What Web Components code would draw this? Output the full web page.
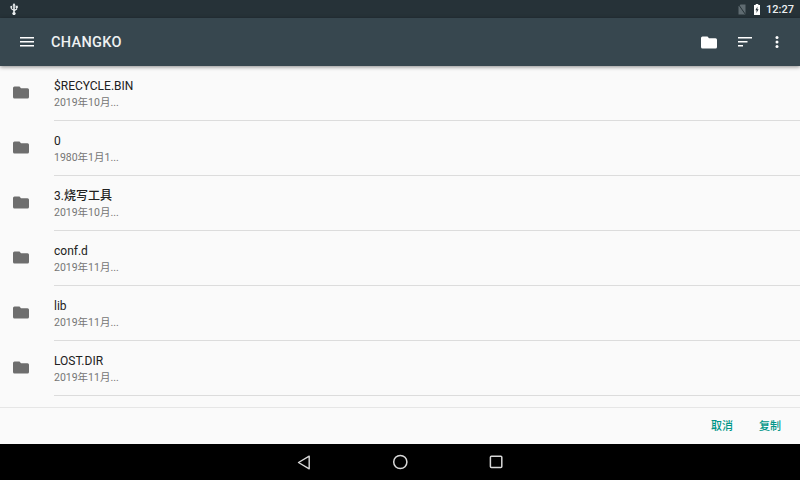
<!DOCTYPE html>
<html><head><meta charset="utf-8">
<style>
html,body{margin:0;padding:0;width:800px;height:480px;overflow:hidden;background:#fafafa;font-family:Roboto,"Noto Sans CJK SC",sans-serif}
body{display:flex;flex-direction:column}
.cjk{font-weight:500}
</style></head><body>
<template id="t-status"><style>
:host{display:flex;height:18px;background:#263238;color:#fff;align-items:center;padding:0 6px 0 10px;flex:none;font:500 11px Roboto,sans-serif}
.sp{flex:1}svg{display:block}
.time{margin-left:6px;color:#eceff1}
.sim{margin-right:8px}
</style>
<svg width="8" height="12" viewBox="0 0 8 12"><path d="M4 0 5.6 2.4H4.8V6.6L6.2 5.8V5H5.6V2.8H7.8V5H7.2V6.4L4.8 7.9V9.2A1.6 1.6 0 1 1 3.2 9.2V7.6L.8 6.1V4.8A1 1 0 1 1 1.8 4.8V5.5L3.2 6.3V2.4H2.4Z" fill="#eceff1"/></svg>
<span class="sp"></span>
<svg class="sim" width="8" height="11" viewBox="0 0 8 11"><path d="M2.5 .5H7.5V10.5H.5V2.5Z" fill="#5f6b71"/><path d="M.5 .5 7.5 10.5" stroke="#263238" stroke-width="1"/></svg>
<svg width="6" height="11" viewBox="0 0 6 11"><path d="M1.7 0H4.3V1H6V11H0V1H1.7Z" fill="#fff"/><path d="M3.5 2.5 1.4 6.2H2.7L2.4 9 4.6 5.2H3.3Z" fill="#263238"/></svg>
<span class="time">12:27</span></template>

<template id="t-toolbar"><style>
:host{display:flex;height:48px;flex:none;background:#37474f;color:#fff;align-items:center;box-shadow:0 1px 4px rgba(0,0,0,.45);position:relative;z-index:1}
.menu{margin-left:20px;width:14px}
h1{margin:0 0 0 17px;flex:1;font:500 14.5px Roboto,sans-serif;letter-spacing:.3px;color:#eef1f2}
svg{display:block}
.a{margin-right:21px}.b{margin-right:23px}.c{margin-right:21px}
</style>
<svg class="menu" width="14" height="10" viewBox="0 0 14 10"><path d="M0 0H14V1.5H0ZM0 4H14V5.5H0ZM0 8H14V9.5H0Z" fill="#fff"/></svg>
<h1><slot></slot></h1>
<svg class="a" width="16" height="13" viewBox="0 0 16 13"><path d="M1.5 .5H6.5L8 2.2H14.5A1.5 1.5 0 0 1 16 3.7V11A1.5 1.5 0 0 1 14.5 12.5H1.5A1.5 1.5 0 0 1 0 11V2A1.5 1.5 0 0 1 1.5 .5Z" fill="#fff"/></svg>
<svg class="b" width="14" height="10" viewBox="0 0 14 10"><path d="M0 0H14V1.5H0ZM0 4H9.5V5.5H0ZM0 8H5V9.5H0Z" fill="#fff"/></svg>
<svg class="c" width="4" height="12" viewBox="0 0 4 12"><circle cx="2" cy="1.6" r="1.5" fill="#fff"/><circle cx="2" cy="6" r="1.5" fill="#fff"/><circle cx="2" cy="10.4" r="1.5" fill="#fff"/></svg></template>

<template id="t-row"><style>
:host{display:flex;height:55px;flex:none;align-items:stretch}
.ic{width:54px;flex:none;display:flex;align-items:center;padding-left:13px;box-sizing:border-box}
.ic svg{display:block;margin-top:-2px}
.t{flex:1;border-bottom:1px solid #dcdcdc;padding-top:12px;box-sizing:border-box;min-width:0}
.n{font-size:12px;line-height:16px;color:#212121;height:16px}
.d{font-size:10.5px;line-height:15px;color:#757575;height:15px;padding-top:1px}
</style>
<div class="ic"><svg width="16" height="13" viewBox="0 0 16 13"><path d="M1.5 .5H6.5L8 2.2H14.5A1.5 1.5 0 0 1 16 3.7V11A1.5 1.5 0 0 1 14.5 12.5H1.5A1.5 1.5 0 0 1 0 11V2A1.5 1.5 0 0 1 1.5 .5Z" fill="#6e6e6e"/></svg></div>
<div class="t"><div class="n"><slot name="n"></slot></div><div class="d"><slot name="d"></slot></div></div></template>

<template id="t-list"><style>:host{display:block;flex:1;min-height:0;overflow:hidden;background:#fafafa}</style><slot></slot></template>

<template id="t-actions"><style>
:host{display:flex;height:37px;flex:none;justify-content:flex-end;align-items:center;border-top:1px solid #e6e6e6;background:#fafafa;box-sizing:border-box;gap:26px;padding-right:19px;padding-bottom:2px;color:#009688;font:500 11px "Noto Sans CJK SC",sans-serif}
</style><slot></slot></template>

<template id="t-nav"><style>
:host{display:flex;height:36px;flex:none;background:#000;align-items:center;justify-content:center;gap:81px;padding-right:0}
svg{display:block}
</style>
<svg width="14" height="15" viewBox="0 0 14 15"><path d="M12.2 1.2V13.8L1.5 7.5Z" fill="none" stroke="#d8d8d8" stroke-width="1.4" stroke-linejoin="round"/></svg>
<svg width="16" height="16" viewBox="0 0 16 16"><circle cx="8.3" cy="8" r="6.6" fill="none" stroke="#d8d8d8" stroke-width="1.5"/></svg>
<svg width="14" height="14" viewBox="0 0 14 14"><rect x="1.4" y="1.2" width="11.4" height="11.4" rx="1" fill="none" stroke="#d8d8d8" stroke-width="1.5"/></svg></template>

<x-status></x-status>
<x-toolbar>CHANGKO</x-toolbar>
<x-list>
<x-row><span slot="n">$RECYCLE.BIN</span><span slot="d">2019年10月...</span></x-row>
<x-row><span slot="n">0</span><span slot="d">1980年1月1...</span></x-row>
<x-row><span slot="n">3.<span class="cjk">烧写工具</span></span><span slot="d">2019年10月...</span></x-row>
<x-row><span slot="n">conf.d</span><span slot="d">2019年11月...</span></x-row>
<x-row><span slot="n">lib</span><span slot="d">2019年11月...</span></x-row>
<x-row><span slot="n">LOST.DIR</span><span slot="d">2019年11月...</span></x-row>
</x-list>
<x-actions><span>取消</span><span>复制</span></x-actions>
<x-nav></x-nav>
<script>
for(const [tag,id] of [['x-status','t-status'],['x-toolbar','t-toolbar'],['x-row','t-row'],['x-list','t-list'],['x-actions','t-actions'],['x-nav','t-nav']]){
  customElements.define(tag,class extends HTMLElement{constructor(){super();this.attachShadow({mode:'open'}).appendChild(document.getElementById(id).content.cloneNode(true));}});
}
</script>
</body></html>
